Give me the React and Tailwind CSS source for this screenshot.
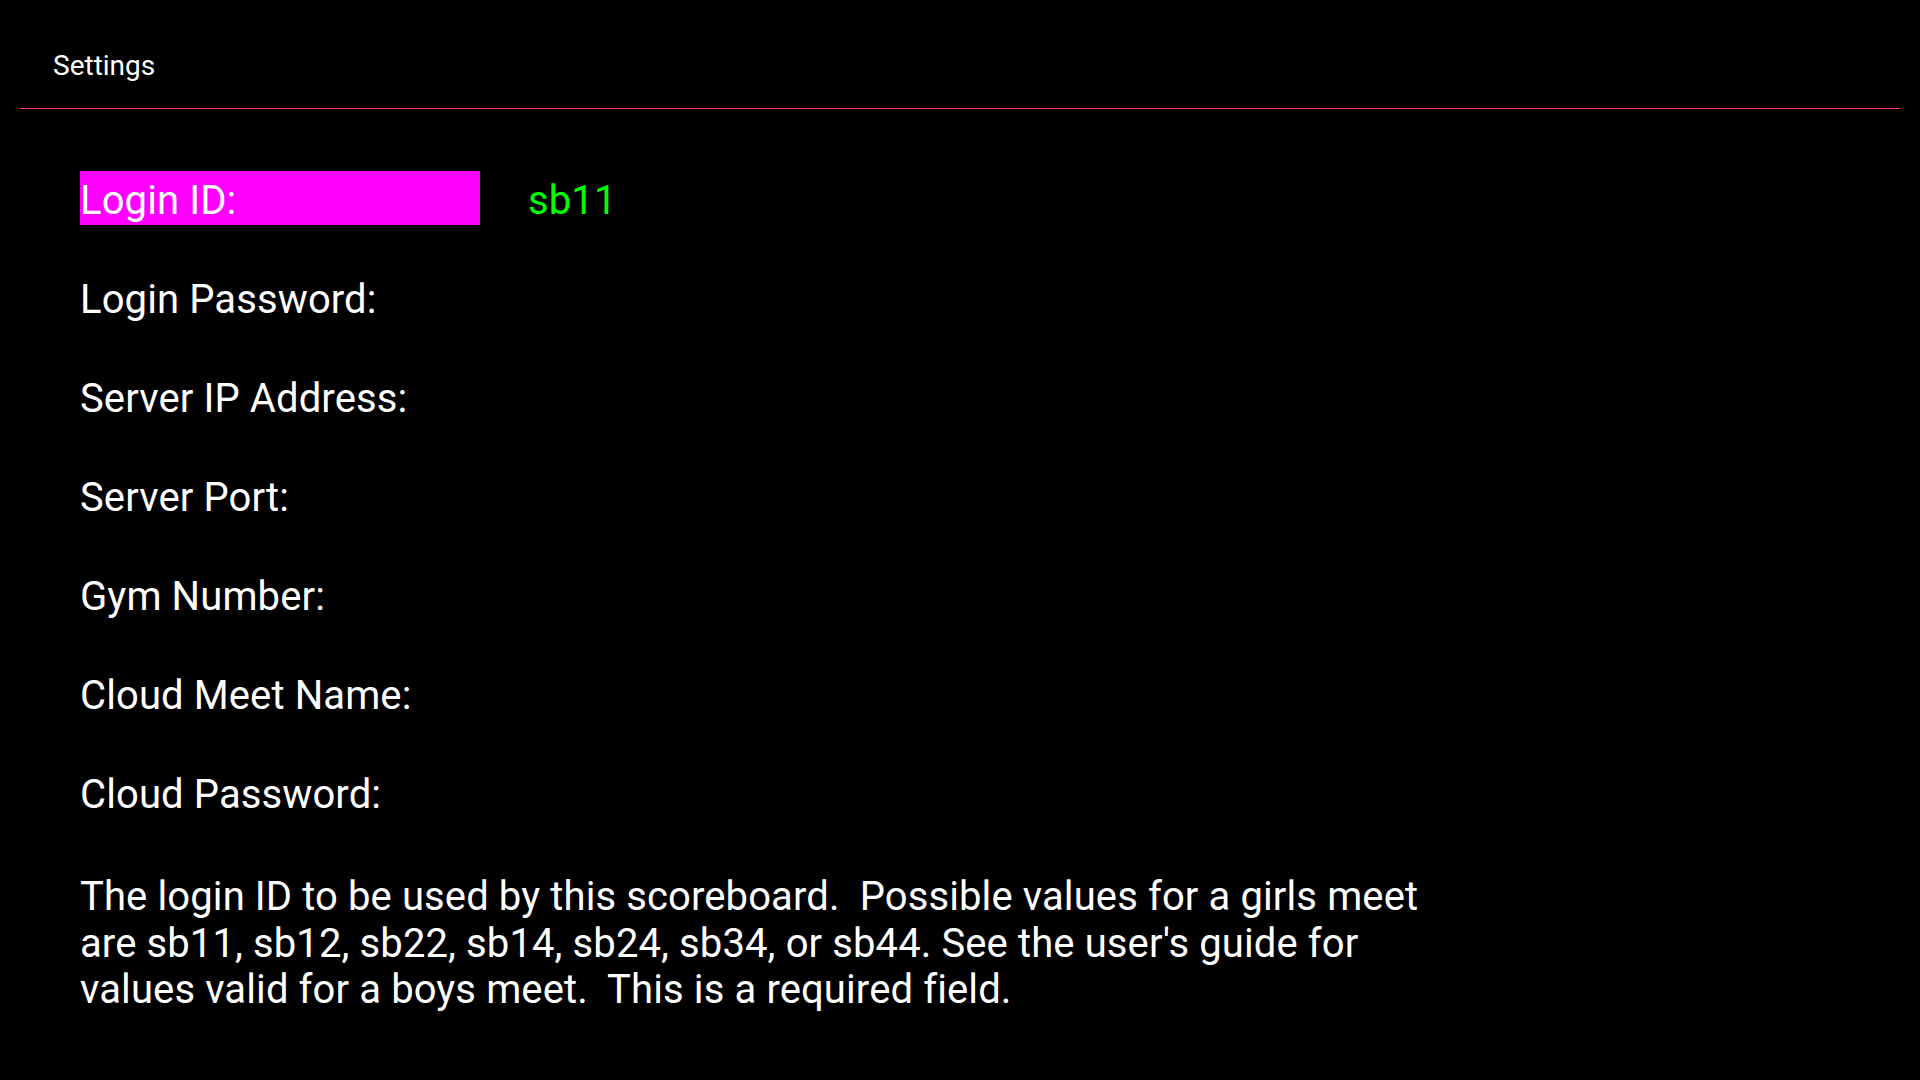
export default function App() {
  const rows = [
    "Login Password:",
    "Server IP Address:",
    "Server Port:",
    "Gym Number:",
    "Cloud Meet Name:",
    "Cloud Password:",
  ];
  return (
    <div className="min-h-screen w-full bg-black text-white" style={{ fontFamily: "Roboto, 'Noto Sans', sans-serif" }}>
      <div className="pt-[49px] pl-[53px] text-[28px] leading-[normal]">Settings</div>
      <div className="mx-[20px] mt-[26px] h-px bg-[#ff3366]" />
      <div className="pl-[80px] pt-[62px] tracking-[0.11px]">
        <div className="flex flex-col gap-[45px]">
          <div className="flex h-[54px] items-start">
            <div className="h-[54px] w-[400px] bg-[#ff00ff] pt-[6px] text-[40px] leading-[normal]">Login ID:</div>
            <div className="ml-[48px] pt-[6px] text-[40px] leading-[normal] text-[#00ff00]">sb11</div>
          </div>
          {rows.map((r) => (
            <div key={r} className="h-[54px] pt-[6px] text-[40px] leading-[normal]">
              {r}
            </div>
          ))}
        </div>
        <div className="mt-[55px] w-[1350px] whitespace-pre-wrap text-[40px] leading-[46.5px]">
          {"The login ID to be used by this scoreboard.  Possible values for a girls meet are sb11, sb12, sb22, sb14, sb24, sb34, or sb44. See the user's guide for values valid for a boys meet.  This is a required field."}
        </div>
      </div>
    </div>
  );
}
